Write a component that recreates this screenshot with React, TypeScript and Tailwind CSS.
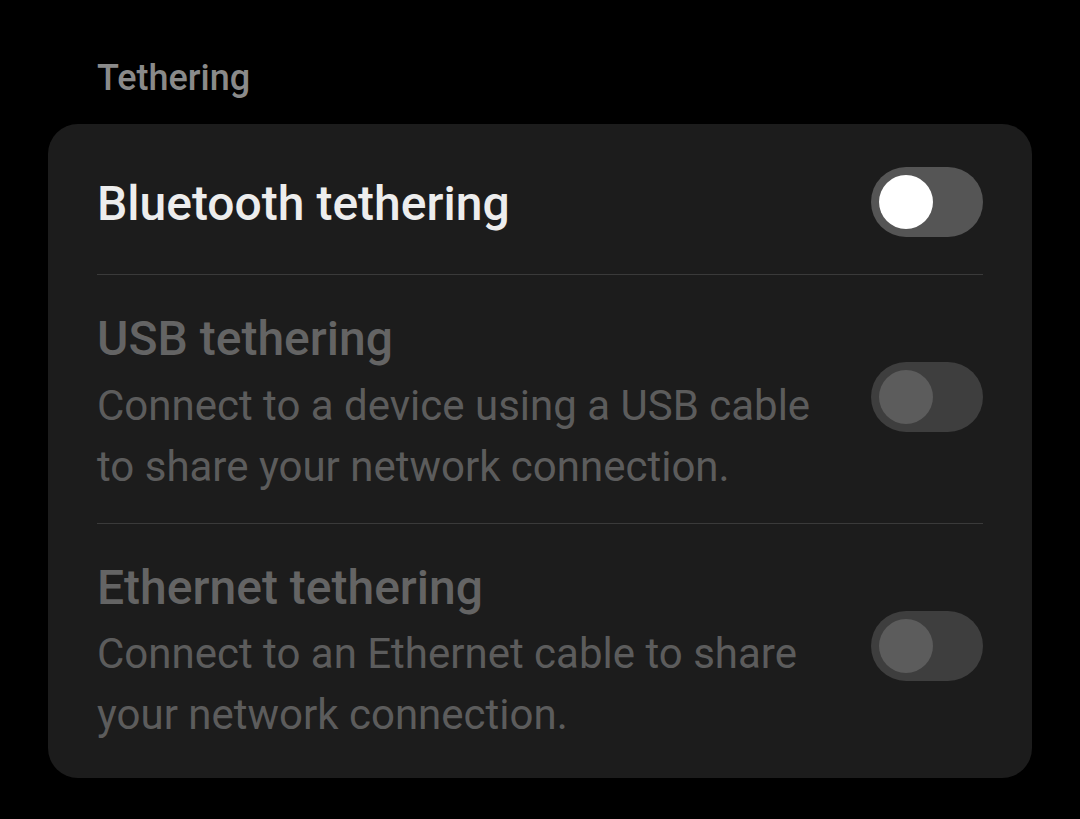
import React from 'react';

type Item = {
  title: string;
  desc?: string[];
  enabled: boolean;
  pad: string;
};

const items: Item[] = [
  { title: 'Bluetooth tethering', enabled: true, pad: 'h-[150px]' },
  {
    title: 'USB tethering',
    desc: ['Connect to a device using a USB cable', 'to share your network connection.'],
    enabled: false,
    pad: 'pt-[35px] pb-[26px]',
  },
  {
    title: 'Ethernet tethering',
    desc: ['Connect to an Ethernet cable to share', 'your network connection.'],
    enabled: false,
    pad: 'pt-[35px] pb-[33px]',
  },
];

function Toggle({ enabled }: { enabled: boolean }) {
  return (
    <div
      className={`w-[112px] h-[70px] rounded-full flex items-center pl-[8px] shrink-0 ${
        enabled ? 'bg-[#555555] mt-[43px]' : 'bg-[#3e3e3e] mt-[52px]'
      }`}
    >
      <div className={`w-[54px] h-[54px] rounded-full ${enabled ? 'bg-white' : 'bg-[#5c5c5c]'}`} />
    </div>
  );
}

export default function App() {
  return (
    <div
      className="w-[1080px] h-[819px] bg-black overflow-hidden"
      style={{ fontFamily: 'Roboto, "Noto Sans", sans-serif' }}
    >
      <div className="pt-[56px] pl-[97px] text-[36px] leading-[44px] font-medium text-[#8a8a8a]">Tethering</div>
      <div className="mx-[48px] mt-[24px] rounded-[30px] bg-[#1c1c1c] px-[49px]">
        {items.map((item, i) => (
          <div key={item.title}>
            {i > 0 && <div className="h-px bg-[#3a3a3a]" />}
            <div className={`flex items-start justify-between ${item.pad}`}>
              <div className={item.desc ? '' : 'mt-[51px]'}>
                <div
                  className={`text-[48px] leading-[58px] font-medium ${
                    item.enabled ? 'text-[#ededed]' : 'text-[#646464]'
                  }`}
                >
                  {item.title}
                </div>
                {item.desc && (
                  <div className={`text-[42px] leading-[61px] text-[#5c5c5c] ${i === 2 ? 'mt-[6px]' : 'mt-[7px]'}`}>
                    {item.desc.map((l) => (
                      <div key={l}>{l}</div>
                    ))}
                  </div>
                )}
              </div>
              <Toggle enabled={item.enabled} />
            </div>
          </div>
        ))}
      </div>
    </div>
  );
}
